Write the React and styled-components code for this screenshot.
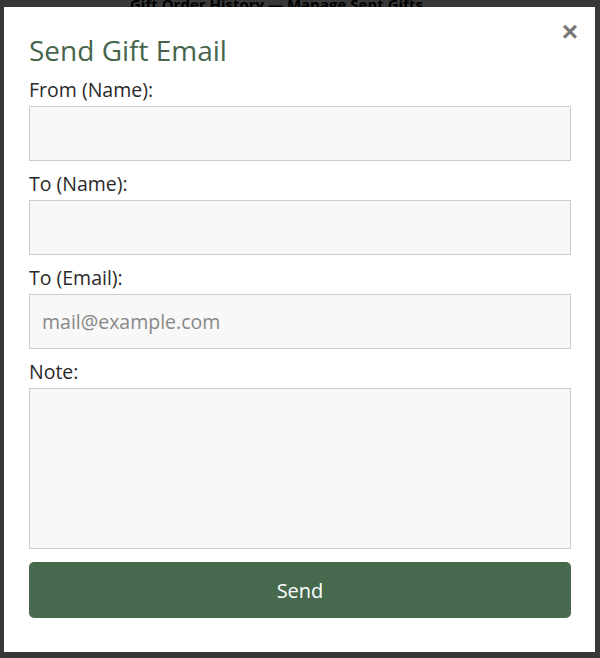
import React from "react";
import styled, { createGlobalStyle } from "styled-components";

const Global = createGlobalStyle`
  html, body { margin: 0; padding: 0; background: #fff; }
  body { font-family: "Open Sans", "Liberation Sans", sans-serif; }
  * { box-sizing: border-box; }
`;

const Page = styled.div`
  width: 600px;
  height: 658px;
  overflow: hidden;
  display: flex;
  flex-direction: column;
  justify-content: space-between;
  color: #000;
`;

const PageTitle = styled.div`
  font-size: 15px;
  font-weight: 700;
  padding: 0 130px;
  margin-top: -6px;
`;

const TableHead = styled.div`
  display: grid;
  grid-template-columns: 76px 60px 130px 160px 100px;
  margin-bottom: -14px;
  font-size: 15px;
  font-weight: 700;
  letter-spacing: 0.5px;
  column-gap: 6px;
`;

const Overlay = styled.div`
  position: fixed;
  inset: 0;
  background: rgba(0, 0, 0, 0.78);
  padding: 7px 5px 6px 4px;
  display: flex;
`;

const Modal = styled.div`
  position: relative;
  flex: 1;
  background: #fff;
  padding: 24px 24px 0 25px;
  display: flex;
  flex-direction: column;
`;

const Close = styled.button`
  position: absolute;
  top: 11px;
  right: 17px;
  border: 0;
  background: none;
  padding: 0;
  color: #777;
  font-family: "Liberation Sans", sans-serif;
  font-size: 28px;
  font-weight: 700;
  line-height: 28px;
  cursor: pointer;
`;

const Title = styled.h2`
  margin: 0 0 9px;
  font-size: 28px;
  font-weight: 400;
  line-height: 38px;
  color: #46654c;
`;

const Field = styled.div`
  display: flex;
  flex-direction: column;
  margin-bottom: ${(p) => (p.$last ? "13px" : "11px")};
`;

const Label = styled.label`
  font-size: 19.5px;
  line-height: 24px;
  color: #2a2a2a;
  margin-bottom: 4px;
`;

const Input = styled.input`
  height: 55px;
  width: 100%;
  border: 1px solid #ccc;
  background: #f8f8f8;
  padding: 0 12px;
  font-family: inherit;
  font-size: 19.5px;
  color: #333;
  &::placeholder { color: #888; }
`;

const TextArea = styled.textarea`
  height: 161px;
  width: 100%;
  border: 1px solid #ccc;
  background: #f8f8f8;
  padding: 10px 12px;
  font-family: inherit;
  font-size: 19.5px;
  resize: none;
`;

const SendButton = styled.button`
  height: 56px;
  width: 100%;
  border: 0;
  border-radius: 5px;
  background: #476a4f;
  color: #fff;
  font-family: inherit;
  font-size: 20px;
  cursor: pointer;
`;

export default function App() {
  return (
    <>
      <Global />
      <Page>
        <PageTitle>Gift Order History — Manage Sent Gifts</PageTitle>
        <TableHead>
          <span>SHIP</span>
          <span>METHOD</span>
          <span>STATUS</span>
          <span>INVOICE</span>
          <span>DOWNLOAD</span>
        </TableHead>
      </Page>
      <Overlay>
        <Modal>
          <Close aria-label="Close">×</Close>
          <Title>Send Gift Email</Title>
          <Field>
            <Label>From (Name):</Label>
            <Input type="text" />
          </Field>
          <Field>
            <Label>To (Name):</Label>
            <Input type="text" />
          </Field>
          <Field>
            <Label>To (Email):</Label>
            <Input type="email" placeholder="mail@example.com" />
          </Field>
          <Field $last>
            <Label>Note:</Label>
            <TextArea />
          </Field>
          <SendButton>Send</SendButton>
        </Modal>
      </Overlay>
    </>
  );
}
